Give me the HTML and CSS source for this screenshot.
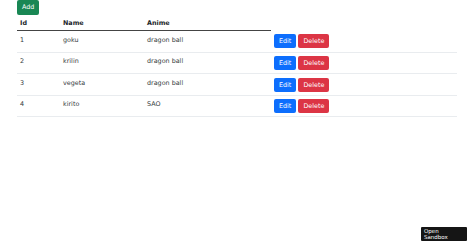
FILE: index.html
```html
<!DOCTYPE html>
<html lang="en">
<head>
    <meta charset="UTF-8">
    <meta name="viewport" content="width=device-width, initial-scale=1.0">
    <title>Anime List</title>
    <link rel="stylesheet" href="styles.css">
</head>
<body>
    <main class="container">
        <button class="btn btn-success">Add</button>
        <table class="table">
            <thead>
                <tr>
                    <th class="col-id">Id</th>
                    <th class="col-name">Name</th>
                    <th class="col-anime">Anime</th>
                </tr>
            </thead>
            <tbody>
                <tr>
                    <td>1</td>
                    <td>goku</td>
                    <td>dragon ball</td>
                    <td class="actions"><button class="btn btn-primary">Edit</button><button class="btn btn-danger">Delete</button></td>
                </tr>
                <tr>
                    <td>2</td>
                    <td>krilin</td>
                    <td>dragon ball</td>
                    <td class="actions"><button class="btn btn-primary">Edit</button><button class="btn btn-danger">Delete</button></td>
                </tr>
                <tr>
                    <td>3</td>
                    <td>vegeta</td>
                    <td>dragon ball</td>
                    <td class="actions"><button class="btn btn-primary">Edit</button><button class="btn btn-danger">Delete</button></td>
                </tr>
                <tr>
                    <td>4</td>
                    <td>kirito</td>
                    <td>SAO</td>
                    <td class="actions"><button class="btn btn-primary">Edit</button><button class="btn btn-danger">Delete</button></td>
                </tr>
            </tbody>
        </table>
    </main>
    <a class="sandbox" href="#">Open<br>Sandbox</a>
</body>
</html>
```

FILE: styles.css
```css
body {
    font-family: "DejaVu Sans", sans-serif;
    font-size: 6.4px;
    color: #343a40;
    background-color: #fff;
    margin: 0;
}
.container {
    padding: 0 17px;
}
.btn {
    font-family: inherit;
    font-size: 6.4px;
    line-height: 10px;
    color: #fff;
    border: none;
    border-radius: 2px;
    padding: 2px 5px;
    cursor: pointer;
}
.btn-success {
    background-color: #198754;
    padding: 2.4px 5px;
}
.btn-primary {
    background-color: #0d6efd;
}
.btn-danger {
    background-color: #dc3545;
    margin-left: 2px;
}
.table {
    width: 100%;
    border-collapse: collapse;
    margin-top: 0;
}
.table th {
    text-align: left;
    font-weight: bold;
    color: #212529;
    line-height: 10px;
    padding: 3px 3px 2.5px;
    border-bottom: 1px solid #444;
}
.table td {
    vertical-align: top;
    line-height: 10px;
    padding: 3.25px 3px;
    height: 14px;
    border-bottom: 1px solid #e9ecef;
}
.col-id {
    width: 37px;
}
.col-name {
    width: 78px;
}
.col-anime {
    width: 121px;
}
.actions {
    white-space: nowrap;
}
.sandbox {
    position: fixed;
    right: 7px;
    bottom: 7px;
    width: 40px;
    padding: 1px 3px;
    background-color: #151515;
    color: #fff;
    font-size: 5.5px;
    line-height: 6px;
    text-decoration: none;
    border-radius: 1px;
}
```
